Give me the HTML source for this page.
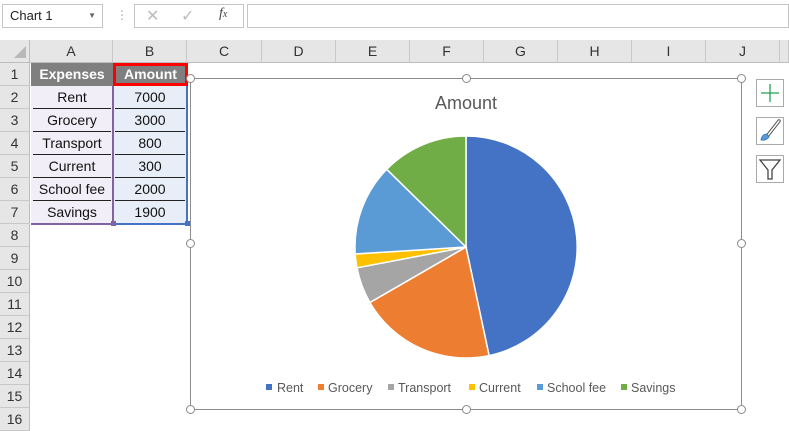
<!DOCTYPE html>
<html><head><meta charset="utf-8"><style>
*{margin:0;padding:0;box-sizing:border-box}
body{width:789px;height:430px;overflow:hidden;background:#fff;font-family:"Liberation Sans",sans-serif;position:relative}
.abs{position:absolute}
.colh{position:absolute;top:40px;height:23px;background:#e6e6e6;border-right:1px solid #c8c8c8;border-bottom:1px solid #bdbdbd;font-size:14px;color:#333;text-align:center;line-height:22px}
.rowh{position:absolute;left:0;width:30px;height:23px;background:#e6e6e6;border-bottom:1px solid #c8c8c8;border-right:1px solid #bdbdbd;font-size:14px;color:#333;text-align:center;line-height:23px}
.cell{position:absolute;height:23px;font-size:14px;color:#111;text-align:center;line-height:22px;border-bottom:1px solid #222}
.h{position:absolute;width:9px;height:9px;border:1.5px solid #888;border-radius:50%;background:#fff}
.btn{position:absolute;left:756px;width:28px;height:28px;border:1px solid #aaa;background:#fff}
</style></head><body>
<div class="abs" style="left:2px;top:4px;width:101px;height:24px;border:1px solid #c6c6c6;font-size:13px;line-height:22px;padding-left:7px;color:#222">Chart 1<span style="position:absolute;right:6px;top:0;font-size:8px;color:#666">▼</span></div>
<div class="abs" style="left:116px;top:8px;color:#aaa;font-size:12px">⋮</div>
<div class="abs" style="left:134px;top:4px;width:110px;height:24px;border:1px solid #c6c6c6"></div>
<div class="abs" style="left:146px;top:6px;color:#bbb;font-size:16px">✕</div>
<div class="abs" style="left:181px;top:6px;color:#bbb;font-size:16px">✓</div>
<div class="abs" style="left:219px;top:6px;color:#444;font-size:14px;font-style:italic;font-family:'Liberation Serif',serif">f<span style="font-size:10px">x</span></div>
<div class="abs" style="left:247px;top:4px;width:542px;height:24px;border:1px solid #c6c6c6"></div>
<div class="abs" style="left:0;top:40px;width:30px;height:23px;background:#e6e6e6;border-right:1px solid #bdbdbd;border-bottom:1px solid #bdbdbd"></div>
<div class="abs" style="left:14px;top:46px;width:0;height:0;border-left:12px solid transparent;border-bottom:12px solid #b8b8b8"></div>
<div class="colh" style="left:30px;width:83px">A</div>
<div class="colh" style="left:113px;width:74px">B</div>
<div class="colh" style="left:187px;width:75px">C</div>
<div class="colh" style="left:262px;width:74px">D</div>
<div class="colh" style="left:336px;width:74px">E</div>
<div class="colh" style="left:410px;width:74px">F</div>
<div class="colh" style="left:484px;width:74px">G</div>
<div class="colh" style="left:558px;width:74px">H</div>
<div class="colh" style="left:632px;width:74px">I</div>
<div class="colh" style="left:706px;width:74px">J</div>
<div class="colh" style="left:780px;width:9px"></div>
<div class="rowh" style="top:63px">1</div><div class="rowh" style="top:86px">2</div><div class="rowh" style="top:109px">3</div><div class="rowh" style="top:132px">4</div><div class="rowh" style="top:155px">5</div><div class="rowh" style="top:178px">6</div><div class="rowh" style="top:201px">7</div><div class="rowh" style="top:224px">8</div><div class="rowh" style="top:247px">9</div><div class="rowh" style="top:270px">10</div><div class="rowh" style="top:293px">11</div><div class="rowh" style="top:316px">12</div><div class="rowh" style="top:339px">13</div><div class="rowh" style="top:362px">14</div><div class="rowh" style="top:385px">15</div><div class="rowh" style="top:408px">16</div>
<div class="cell" style="left:31px;top:63px;width:82px;background:#7f7f7f;color:#fff;font-weight:bold;border:none">Expenses</div>
<div class="cell" style="left:113px;top:63px;width:75px;background:#7f7f7f;color:#fff;font-weight:bold;border:3px solid #f00;line-height:17px">Amount</div>
<div class="abs" style="left:31px;top:86px;width:82px;height:138px;background:#f1eef7"></div>
<div class="abs" style="left:113px;top:86px;width:74px;height:138px;background:#e8eef8"></div>
<div class="cell" style="left:33px;top:86px;width:78px">Rent</div><div class="cell" style="left:115px;top:86px;width:70px">7000</div>
<div class="cell" style="left:33px;top:109px;width:78px">Grocery</div><div class="cell" style="left:115px;top:109px;width:70px">3000</div>
<div class="cell" style="left:33px;top:132px;width:78px">Transport</div><div class="cell" style="left:115px;top:132px;width:70px">800</div>
<div class="cell" style="left:33px;top:155px;width:78px">Current</div><div class="cell" style="left:115px;top:155px;width:70px">300</div>
<div class="cell" style="left:33px;top:178px;width:78px">School fee</div><div class="cell" style="left:115px;top:178px;width:70px">2000</div>
<div class="cell" style="left:33px;top:201px;width:78px;border:none">Savings</div><div class="cell" style="left:115px;top:201px;width:70px;border:none">1900</div>
<div class="abs" style="left:31px;top:223px;width:82px;height:2px;background:#8064a2"></div>
<div class="abs" style="left:112px;top:86px;width:2px;height:138px;background:#8064a2"></div>
<div class="abs" style="left:111px;top:221px;width:5px;height:5px;background:#8064a2"></div>
<div class="abs" style="left:116px;top:223px;width:70px;height:2px;background:#4472c4"></div>
<div class="abs" style="left:186px;top:86px;width:2px;height:138px;background:#4472c4"></div>
<div class="abs" style="left:185px;top:221px;width:5px;height:5px;background:#4472c4"></div>
<div class="abs" style="left:190px;top:78px;width:552px;height:332px;border:1px solid #8c8c8c;background:#fff"></div>
<div class="h" style="left:186px;top:74px"></div><div class="h" style="left:462px;top:74px"></div><div class="h" style="left:737px;top:74px"></div>
<div class="h" style="left:186px;top:239px"></div><div class="h" style="left:737px;top:239px"></div>
<div class="h" style="left:186px;top:405px"></div><div class="h" style="left:462px;top:405px"></div><div class="h" style="left:737px;top:405px"></div>
<div class="abs" style="left:190px;top:93px;width:552px;text-align:center;font-size:18px;color:#595959">Amount</div>
<svg class="abs" style="left:0;top:0" width="789" height="430">
<g stroke="#fff" stroke-width="1.5">
<path d="M466,247 L466,136 A111,111 0 0 1 489.1,355.6 Z" fill="#4472C4"/>
<path d="M466,247 L489.1,355.6 A111,111 0 0 1 369.9,302.5 Z" fill="#ED7D31"/>
<path d="M466,247 L369.9,302.5 A111,111 0 0 1 357,267.8 Z" fill="#A5A5A5"/>
<path d="M466,247 L357,267.8 A111,111 0 0 1 355.2,254 Z" fill="#FFC000"/>
<path d="M466,247 L355.2,254 A111,111 0 0 1 386.7,169.3 Z" fill="#5B9BD5"/>
<path d="M466,247 L386.7,169.3 A111,111 0 0 1 466,136 Z" fill="#70AD47"/>
</g>
<g font-family="Liberation Sans,sans-serif" font-size="12.5" fill="#595959">
<rect x="266" y="384" width="6" height="6" fill="#4472C4"/><text x="277" y="392">Rent</text>
<rect x="318" y="384" width="6" height="6" fill="#ED7D31"/><text x="328" y="392">Grocery</text>
<rect x="388" y="384" width="6" height="6" fill="#A5A5A5"/><text x="398" y="392">Transport</text>
<rect x="469" y="384" width="6" height="6" fill="#FFC000"/><text x="479" y="392">Current</text>
<rect x="537" y="384" width="6" height="6" fill="#5B9BD5"/><text x="547" y="392">School fee</text>
<rect x="621" y="384" width="6" height="6" fill="#70AD47"/><text x="631" y="392">Savings</text>
</g>
</svg>
<div class="btn" style="top:79px"><svg width="26" height="26"><path d="M13,4 V22 M4,13 H22" stroke="#22a050" stroke-width="1.3"/></svg></div>
<div class="btn" style="top:117px"><svg width="26" height="26"><path d="M22,3 L11,17" stroke="#555" stroke-width="3.5" stroke-linecap="round"/><path d="M22,3 L11,17" stroke="#fff" stroke-width="1.5" stroke-linecap="round"/><path d="M10,16 Q5,16 4,22 Q9,23 12,19 Z" fill="#5b9bd5" stroke="#2e75b6" stroke-width="0.8"/></svg></div>
<div class="btn" style="top:155px"><svg width="26" height="26"><path d="M3,4 H23 L15,14 V23 H11 V14 Z" fill="none" stroke="#444" stroke-width="1.3"/></svg></div>
</body></html>
